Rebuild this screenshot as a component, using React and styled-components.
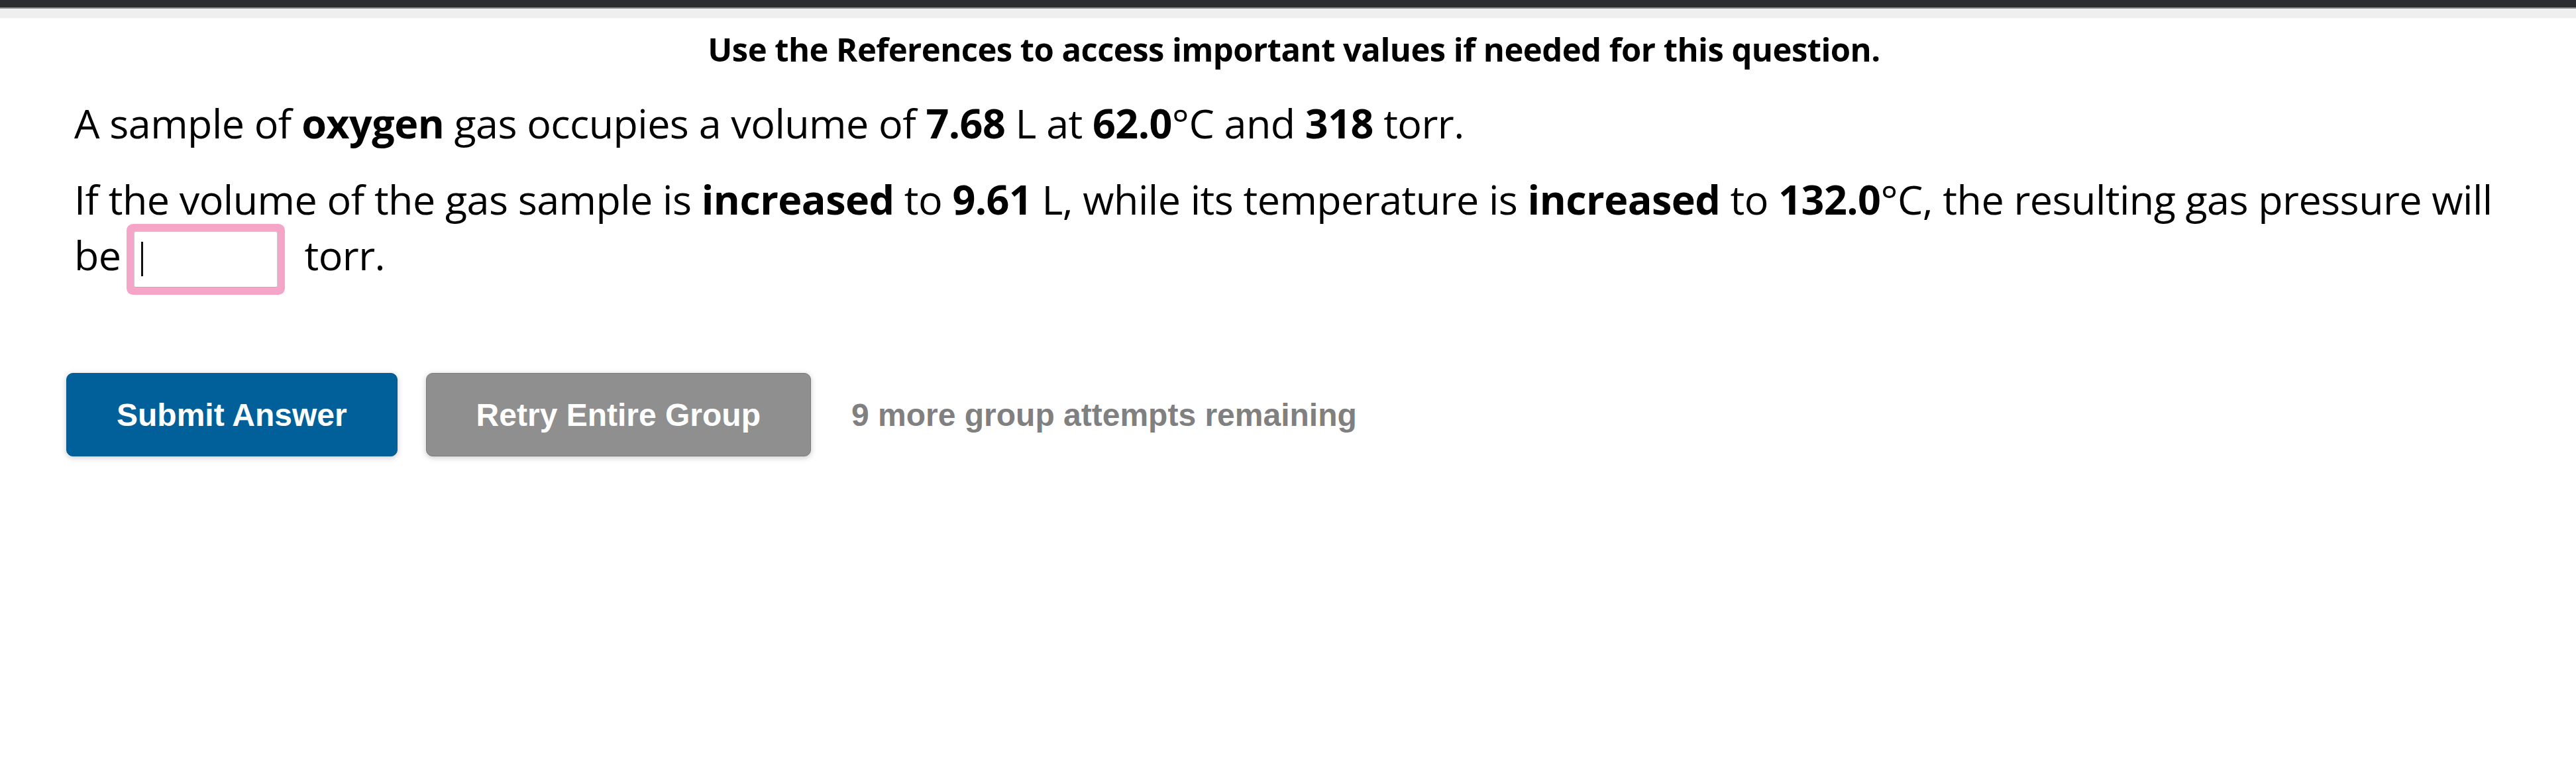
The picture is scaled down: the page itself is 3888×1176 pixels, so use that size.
import React from 'react';
import styled, { createGlobalStyle } from 'styled-components';

const GlobalStyle = createGlobalStyle`
  html, body {
    margin: 0;
    padding: 0;
    background: #ffffff;
  }
  body {
    font-family: "Open Sans", "Liberation Sans", sans-serif;
    color: #000;
  }
`;

const Page = styled.div`
  width: 3888px;
  min-height: 1176px;
  background: #fff;
`;

const TopBar = styled.div`
  height: 11px;
  background: #2b2c30;
  border-bottom: 2px solid #858585;
`;

const SubBar = styled.div`
  height: 14px;
  background: #efefef;
  border-bottom: 1px solid #f7f7f7;
`;

const Notice = styled.p`
  margin: 11px 0 0 18px;
  text-align: center;
  font-weight: 700;
  font-size: 49px;
  letter-spacing: -0.56px;
  line-height: 70px;
`;

const Question = styled.div`
  padding: 0 100px 0 112px;
  font-size: 61px;
  letter-spacing: -0.55px;
  line-height: 84px;
`;

const Para = styled.p`
  margin: ${(p) => p.$top}px 0 0;
`;

const AnswerBox = styled.span`
  position: relative;
  display: inline-block;
  box-sizing: border-box;
  width: 217px;
  height: 85px;
  margin: 0 40px 0 20px;
  vertical-align: -26px;
  background: #fff;
  border: 1px solid #c9c9c9;
  border-bottom-color: #b5b5b5;
  border-radius: 3px;
  box-shadow: 0 0 0 11px #f5a6c8;

  &::after {
    content: '';
    position: absolute;
    left: 10px;
    top: 15px;
    width: 3px;
    height: 52px;
    background: #111;
  }
`;

const Actions = styled.div`
  display: flex;
  align-items: center;
  margin: 129px 0 0 100px;
`;

const Button = styled.button`
  box-sizing: border-box;
  height: 126px;
  padding: 0 75px;
  margin-right: ${(p) => p.$gap}px;
  border: 1px solid ${(p) => (p.$muted ? '#7c7c7c' : '#0a5a8e')};
  border-radius: 10px;
  background: ${(p) => (p.$muted ? '#8f8f8f' : '#01609a')};
  color: #fff;
  font-family: "Liberation Sans", Arial, sans-serif;
  font-weight: 700;
  font-size: 48px;
  box-shadow: 0 2px 9px rgba(0, 0, 0, 0.22);
  cursor: pointer;
`;

const Remaining = styled.span`
  font-family: "Liberation Sans", Arial, sans-serif;
  font-weight: 700;
  font-size: 48px;
  color: #808080;
`;

export default function App() {
  return (
    <Page>
      <GlobalStyle />
      <TopBar />
      <SubBar />
      <Notice>Use the References to access important values if needed for this question.</Notice>
      <Question>
        <Para $top={35}>
          A sample of <b>oxygen</b> gas occupies a volume of <b>7.68</b> L at <b>62.0</b>°C and <b>318</b> torr.
        </Para>
        <Para $top={31}>
          If the volume of the gas sample is <b>increased</b> to <b>9.61</b> L, while its temperature is{' '}
          <b>increased</b> to <b>132.0</b>°C, the resulting gas pressure will be
          <AnswerBox />
          torr.
        </Para>
      </Question>
      <Actions>
        <Button $gap={43}>Submit Answer</Button>
        <Button $muted $gap={61}>Retry Entire Group</Button>
        <Remaining>9 more group attempts remaining</Remaining>
      </Actions>
    </Page>
  );
}
